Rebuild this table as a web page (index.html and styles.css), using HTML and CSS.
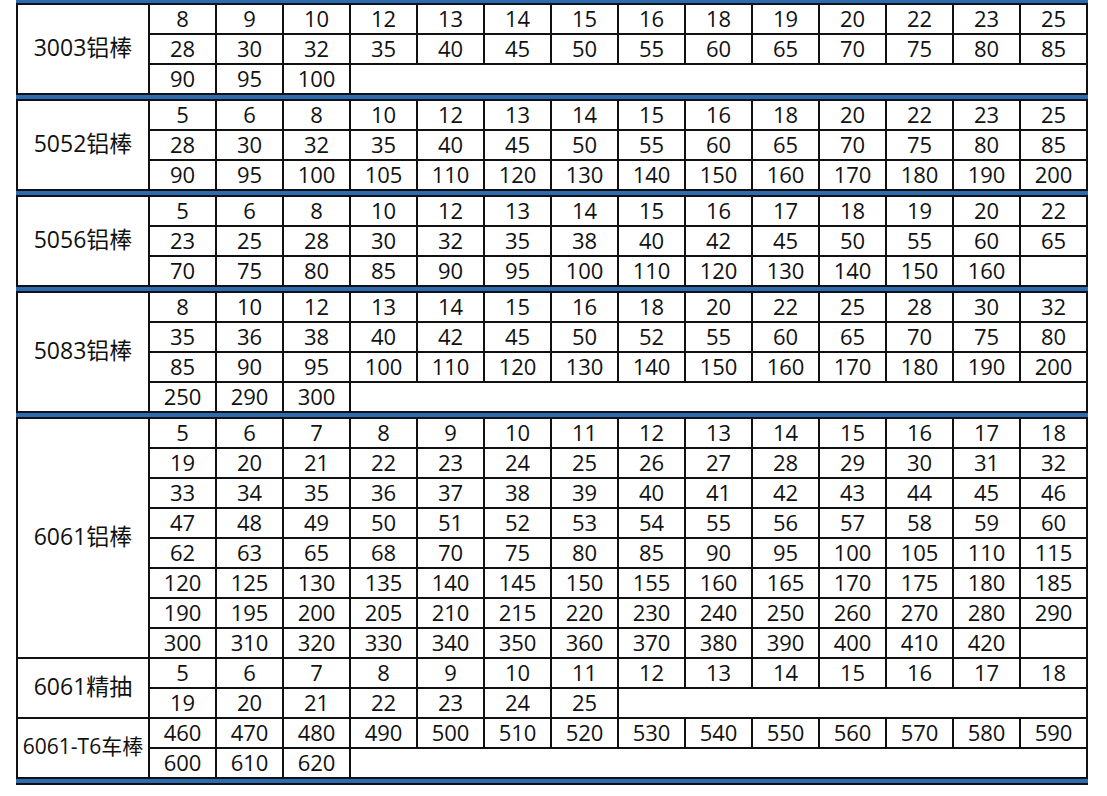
FILE: index.html
```html
<!DOCTYPE html>
<html lang="zh">
<head>
<meta charset="utf-8">
<title>铝棒规格</title>
<link rel="stylesheet" href="styles.css">
</head>
<body>
<div class="sheet">
  <div class="sep top"></div>

  <div class="group">
    <div class="label r3">3003铝棒</div>
    <div>8</div><div>9</div><div>10</div><div>12</div><div>13</div><div>14</div><div>15</div><div>16</div><div>18</div><div>19</div><div>20</div><div>22</div><div>23</div><div>25</div>
    <div>28</div><div>30</div><div>32</div><div>35</div><div>40</div><div>45</div><div>50</div><div>55</div><div>60</div><div>65</div><div>70</div><div>75</div><div>80</div><div>85</div>
    <div>90</div><div>95</div><div>100</div><div class="empty s11"></div>
  </div>
  <div class="sep"></div>

  <div class="group">
    <div class="label r3">5052铝棒</div>
    <div>5</div><div>6</div><div>8</div><div>10</div><div>12</div><div>13</div><div>14</div><div>15</div><div>16</div><div>18</div><div>20</div><div>22</div><div>23</div><div>25</div>
    <div>28</div><div>30</div><div>32</div><div>35</div><div>40</div><div>45</div><div>50</div><div>55</div><div>60</div><div>65</div><div>70</div><div>75</div><div>80</div><div>85</div>
    <div>90</div><div>95</div><div>100</div><div>105</div><div>110</div><div>120</div><div>130</div><div>140</div><div>150</div><div>160</div><div>170</div><div>180</div><div>190</div><div>200</div>
  </div>
  <div class="sep"></div>

  <div class="group">
    <div class="label r3">5056铝棒</div>
    <div>5</div><div>6</div><div>8</div><div>10</div><div>12</div><div>13</div><div>14</div><div>15</div><div>16</div><div>17</div><div>18</div><div>19</div><div>20</div><div>22</div>
    <div>23</div><div>25</div><div>28</div><div>30</div><div>32</div><div>35</div><div>38</div><div>40</div><div>42</div><div>45</div><div>50</div><div>55</div><div>60</div><div>65</div>
    <div>70</div><div>75</div><div>80</div><div>85</div><div>90</div><div>95</div><div>100</div><div>110</div><div>120</div><div>130</div><div>140</div><div>150</div><div>160</div><div class="empty"></div>
  </div>
  <div class="sep"></div>

  <div class="group">
    <div class="label r4">5083铝棒</div>
    <div>8</div><div>10</div><div>12</div><div>13</div><div>14</div><div>15</div><div>16</div><div>18</div><div>20</div><div>22</div><div>25</div><div>28</div><div>30</div><div>32</div>
    <div>35</div><div>36</div><div>38</div><div>40</div><div>42</div><div>45</div><div>50</div><div>52</div><div>55</div><div>60</div><div>65</div><div>70</div><div>75</div><div>80</div>
    <div>85</div><div>90</div><div>95</div><div>100</div><div>110</div><div>120</div><div>130</div><div>140</div><div>150</div><div>160</div><div>170</div><div>180</div><div>190</div><div>200</div>
    <div>250</div><div>290</div><div>300</div><div class="empty s11"></div>
  </div>
  <div class="sep"></div>

  <div class="group">
    <div class="label r8">6061铝棒</div>
    <div>5</div><div>6</div><div>7</div><div>8</div><div>9</div><div>10</div><div>11</div><div>12</div><div>13</div><div>14</div><div>15</div><div>16</div><div>17</div><div>18</div>
    <div>19</div><div>20</div><div>21</div><div>22</div><div>23</div><div>24</div><div>25</div><div>26</div><div>27</div><div>28</div><div>29</div><div>30</div><div>31</div><div>32</div>
    <div>33</div><div>34</div><div>35</div><div>36</div><div>37</div><div>38</div><div>39</div><div>40</div><div>41</div><div>42</div><div>43</div><div>44</div><div>45</div><div>46</div>
    <div>47</div><div>48</div><div>49</div><div>50</div><div>51</div><div>52</div><div>53</div><div>54</div><div>55</div><div>56</div><div>57</div><div>58</div><div>59</div><div>60</div>
    <div>62</div><div>63</div><div>65</div><div>68</div><div>70</div><div>75</div><div>80</div><div>85</div><div>90</div><div>95</div><div>100</div><div>105</div><div>110</div><div>115</div>
    <div>120</div><div>125</div><div>130</div><div>135</div><div>140</div><div>145</div><div>150</div><div>155</div><div>160</div><div>165</div><div>170</div><div>175</div><div>180</div><div>185</div>
    <div>190</div><div>195</div><div>200</div><div>205</div><div>210</div><div>215</div><div>220</div><div>230</div><div>240</div><div>250</div><div>260</div><div>270</div><div>280</div><div>290</div>
    <div>300</div><div>310</div><div>320</div><div>330</div><div>340</div><div>350</div><div>360</div><div>370</div><div>380</div><div>390</div><div>400</div><div>410</div><div>420</div><div class="empty"></div>
  </div>
  <div class="line"></div>

  <div class="group">
    <div class="label r2">6061精抽</div>
    <div>5</div><div>6</div><div>7</div><div>8</div><div>9</div><div>10</div><div>11</div><div>12</div><div>13</div><div>14</div><div>15</div><div>16</div><div>17</div><div>18</div>
    <div>19</div><div>20</div><div>21</div><div>22</div><div>23</div><div>24</div><div>25</div><div class="empty s7"></div>
  </div>
  <div class="line"></div>

  <div class="group">
    <div class="label r2 small">6061-T6车棒</div>
    <div>460</div><div>470</div><div>480</div><div>490</div><div>500</div><div>510</div><div>520</div><div>530</div><div>540</div><div>550</div><div>560</div><div>570</div><div>580</div><div>590</div>
    <div>600</div><div>610</div><div>620</div><div class="empty s11"></div>
  </div>
  <div class="sep"></div>
</div>
</body>
</html>
```

FILE: styles.css
```css
html, body {
  margin: 0;
  padding: 0;
  background: #ffffff;
}

body {
  font-family: "Open Sans", "Noto Sans CJK SC", sans-serif;
  color: #111111;
}

.sheet {
  margin-left: 16px;
  width: 1072px;
  display: flex;
  flex-direction: column;
}

.group {
  display: grid;
  grid-template-columns: 130px repeat(14, 65px);
  grid-auto-rows: 28px;
  gap: 2px;
  padding: 0 2px;
  background: #111111;
}

.group > div {
  background: #ffffff;
  display: flex;
  align-items: center;
  justify-content: center;
  font-size: 22px;
  line-height: 1;
  padding-bottom: 3px;
  box-sizing: border-box;
}

.group > .label {
  grid-column: 1;
  font-size: 23px;
  white-space: nowrap;
}

.label.small {
  font-size: 21px;
}

.r2 { grid-row: span 2; }
.r3 { grid-row: span 3; }
.r4 { grid-row: span 4; }
.r8 { grid-row: span 8; }

.s7 { grid-column: span 7; }
.s11 { grid-column: span 11; }

.sep {
  height: 4px;
  background: #2e6cb1;
  border-top: 2px solid #111111;
  border-bottom: 2px solid #111111;
}

.sep.top {
  height: 3px;
  border-top: 0;
}

.line {
  height: 2px;
  background: #111111;
}
```
